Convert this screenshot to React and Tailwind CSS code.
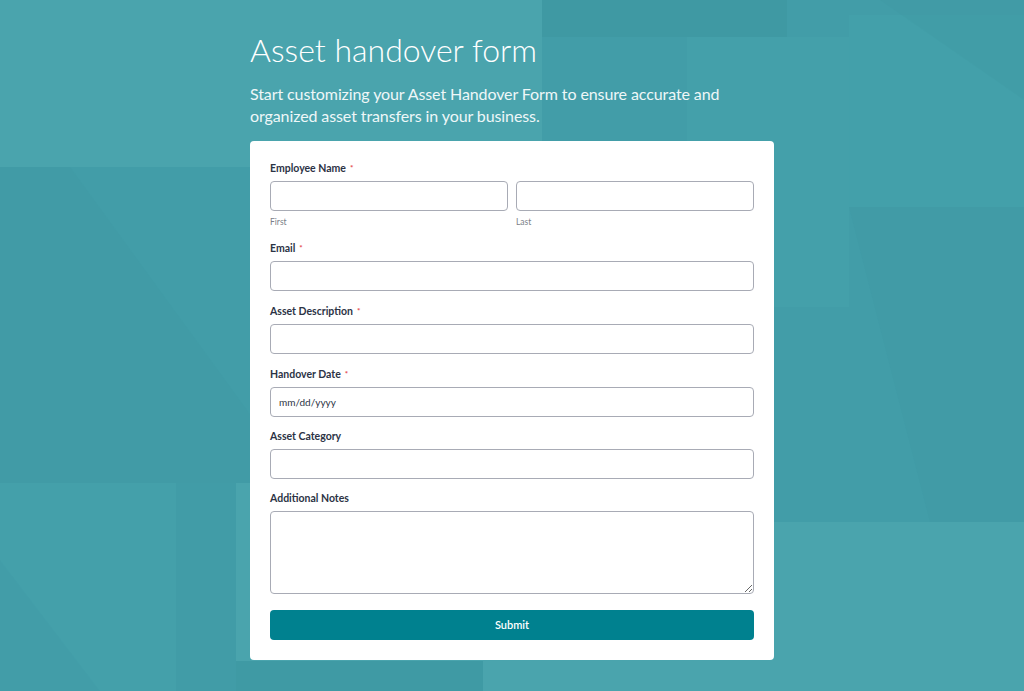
import React from "react";

function Bg() {
  return (
    <svg className="absolute inset-0 h-full w-full" viewBox="0 0 1024 691" preserveAspectRatio="none" aria-hidden="true">
      <rect x="0" y="0" width="1024" height="691" fill="#4aa4ad" />
      <rect x="0" y="167" width="1024" height="316" fill="#429da8" />
      <rect x="542" y="0" width="482" height="522" fill="#429da8" />
      <rect x="542" y="0" width="245" height="37" fill="#3f99a3" />
      <rect x="687" y="37" width="162" height="270" fill="#44a0aa" />
      <rect x="849" y="15" width="175" height="192" fill="#43a0aa" />
      <rect x="0" y="483" width="176" height="208" fill="#44a0aa" />
      <rect x="176" y="483" width="60" height="208" fill="#419ca7" />
      <rect x="236" y="661" width="247" height="30" fill="#3f9aa4" />
      <rect x="777" y="522" width="247" height="169" fill="#4aa4ad" />
      <polygon points="0,167 70,167 300,483 0,483" fill="#3f99a4" opacity="0.35" />
      <polygon points="849,207 1024,207 1024,522 930,522" fill="#3f99a4" opacity="0.35" />
      <polygon points="880,0 1024,0 1024,100" fill="#3e97a2" opacity="0.3" />
      <polygon points="0,560 100,691 0,691" fill="#3f99a4" opacity="0.3" />
    </svg>
  );
}

function Label({ children, required }) {
  return (
    <div className="mb-[6px] flex h-[14px] items-center text-[10.5px] font-bold leading-[14px] text-[#2c3345]">
      <span>{children}</span>
      {required && <span className="ml-[4px] text-[8px] text-[#e5484d]">*</span>}
    </div>
  );
}

const inputCls =
  "block h-[30px] w-full rounded-[4px] border border-[#a8abb5] bg-white px-[8px] text-[10px] text-[#2c3345] outline-none";

export default function App() {
  return (
    <div
      className="relative min-h-[691px] w-full overflow-hidden"
      style={{ fontFamily: "Lato, 'Noto Sans', 'Liberation Sans', sans-serif" }}
    >
      <Bg />
      <div className="relative mx-auto w-[524px] pt-[30px]">
        <h1 className="text-[32px] font-light leading-[40px] text-white">Asset handover form</h1>
        <p className="mt-[13px] text-[16px] font-normal leading-[22px] tracking-[-0.1px] text-[#eef7f8]">
          Start customizing your Asset Handover Form to ensure accurate and organized asset transfers in your business.
        </p>
        <form className="mt-[14px] rounded-[4px] bg-white px-[20px] pt-[20px] pb-[20px]" onSubmit={(e) => e.preventDefault()}>
          <Label required>Employee Name</Label>
          <div className="grid grid-cols-2 gap-[8px]">
            <div>
              <input className={inputCls} />
              <div className="mt-[5px] text-[8.5px] leading-[12px] text-[#7b7f89]">First</div>
            </div>
            <div>
              <input className={inputCls} />
              <div className="mt-[5px] text-[8.5px] leading-[12px] text-[#7b7f89]">Last</div>
            </div>
          </div>

          <div className="mt-[13px]">
            <Label required>Email</Label>
            <input className={inputCls} />
          </div>

          <div className="mt-[13px]">
            <Label required>Asset Description</Label>
            <input className={inputCls} />
          </div>

          <div className="mt-[13px]">
            <Label required>Handover Date</Label>
            <input className={inputCls + " placeholder:text-[#2c3345]"} placeholder="mm/dd/yyyy" />
          </div>

          <div className="mt-[12px]">
            <Label>Asset Category</Label>
            <input className={inputCls} />
          </div>

          <div className="mt-[12px]">
            <Label>Additional Notes</Label>
            <textarea className="block h-[83px] w-full rounded-[4px] border border-[#a8abb5] bg-white px-[8px] py-[6px] text-[10px] outline-none" />
          </div>

          <button
            type="submit"
            className="mt-[16px] block h-[30px] w-full rounded-[4px] bg-[#00818f] text-[11px] font-semibold text-white"
          >
            Submit
          </button>
        </form>
      </div>
    </div>
  );
}
